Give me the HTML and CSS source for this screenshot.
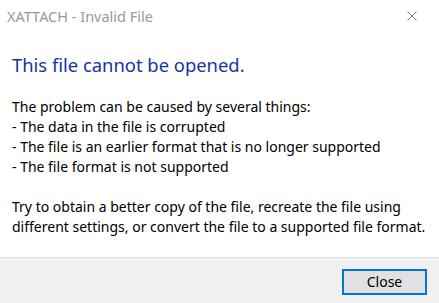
FILE: index.html
```html
<!DOCTYPE html>
<html lang="en">
  <head>
    <meta charset="UTF-8" />
    <title>XATTACH - Invalid File</title>
    <link rel="stylesheet" href="styles.css">
  </head>
  <body>
    <div class="dialog">
      <div class="titlebar">
        <span class="title">XATTACH - Invalid File</span>
        <svg class="close-x" width="10" height="10" viewBox="0 0 10 10">
          <path d="M0.5 0.5 L9.5 9.5 M9.5 0.5 L0.5 9.5" stroke="#777" stroke-width="1" fill="none" />
        </svg>
      </div>

      <div class="content">
        <h1>This file cannot be opened.</h1>
        <p>
          The problem can be caused by several things:<br />
          - The data in the file is corrupted<br />
          - The file is an earlier format that is no longer supported<br />
          - The file format is not supported
        </p>
        <p>
          Try to obtain a better copy of the file, recreate the file using<br />
          different settings, or convert the file to a supported file format.
        </p>
      </div>

      <div class="footer">
        <button class="close-btn">Close</button>
      </div>
    </div>
  </body>
</html>
```

FILE: styles.css
```css
* {
  box-sizing: border-box;
  margin: 0;
  padding: 0;
}

body {
  font-family: "Noto Sans", "Open Sans", sans-serif;
  background-color: #ffffff;
  width: 439px;
  height: 303px;
  overflow: hidden;
}

.dialog {
  display: flex;
  flex-direction: column;
  height: 303px;
}

.titlebar {
  display: flex;
  justify-content: space-between;
  align-items: center;
  height: 32px;
  padding: 2px 22px 0 7px;
}

.title {
  font-size: 14.5px;
  color: #999999;
}

.content {
  flex: 1;
  padding: 21px 12px 0 12px;
}

h1 {
  font-size: 18.4px;
  font-weight: normal;
  color: #1533a5;
  line-height: 26px;
  margin-bottom: 19px;
}

p {
  font-size: 14px;
  line-height: 20px;
  color: #000000;
  margin-bottom: 20px;
}

.footer {
  height: 48px;
  background-color: #f0f0f0;
  border-top: 1px solid #dfdfdf;
  display: flex;
  justify-content: flex-end;
  align-items: flex-start;
  padding: 11px 12px 0 0;
}

.close-btn {
  width: 85px;
  height: 26px;
  background-color: #e1e1e1;
  border: 2px solid #0078d7;
  font-family: "Noto Sans", "Open Sans", sans-serif;
  font-size: 14px;
  color: #000000;
}
```
